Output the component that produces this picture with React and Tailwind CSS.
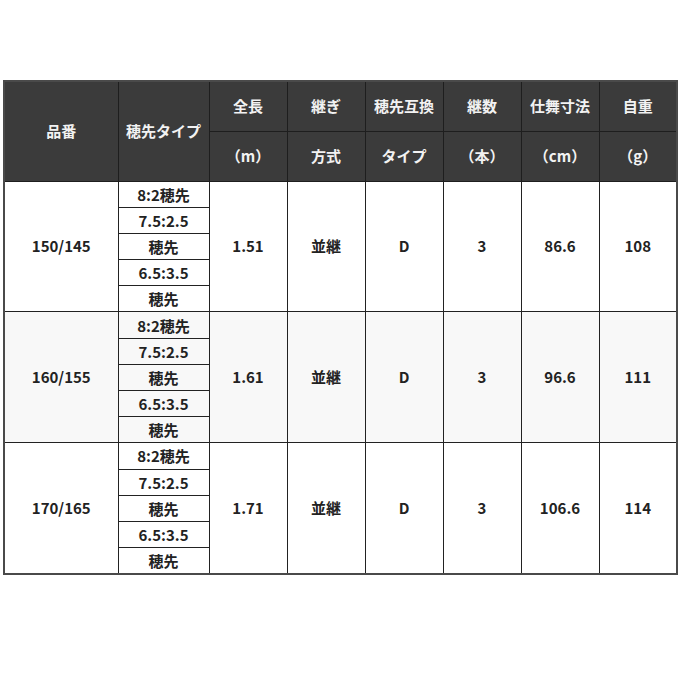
import React from 'react'

const groups = [
  { code: '150/145', length: '1.51', closed: '86.6', weight: '108', bg: 'bg-white' },
  { code: '160/155', length: '1.61', closed: '96.6', weight: '111', bg: 'bg-[#f8f8f8]' },
  { code: '170/165', length: '1.71', closed: '106.6', weight: '114', bg: 'bg-white' },
]

const tips = ['8:2穂先', '7.5:2.5', '穂先', '6.5:3.5', '穂先']

const th = 'border border-[#1e1e1e] bg-[#3b3b3b] text-[#f2f2f2] font-bold text-[15px] text-center align-middle h-[50px] p-0'
const td = 'border border-[#222] text-[#222] font-bold text-[15px] text-center align-middle p-0'

export default function App() {
  return (
    <div className="w-[680px] h-[680px] bg-white pt-[80px] pl-[3px]" style={{ fontFamily: '"Noto Sans CJK JP", "Noto Sans", sans-serif' }}>
      <table className="table-fixed border-collapse w-[673px] border-2 border-[#4a4a4a]">
        <colgroup>
          <col className="w-[114px]" />
          <col className="w-[91px]" />
          <col className="w-[78px]" />
          <col className="w-[78px]" />
          <col className="w-[78px]" />
          <col className="w-[78px]" />
          <col className="w-[78px]" />
          <col className="w-[78px]" />
        </colgroup>
        <thead>
          <tr>
            <th rowSpan={2} className={th}>品番</th>
            <th rowSpan={2} className={th}>穂先タイプ</th>
            <th className={th}>全長</th>
            <th className={th}>継ぎ</th>
            <th className={th}>穂先互換</th>
            <th className={th}>継数</th>
            <th className={th}>仕舞寸法</th>
            <th className={th}>自重</th>
          </tr>
          <tr>
            <th className={th}>（m）</th>
            <th className={th}>方式</th>
            <th className={th}>タイプ</th>
            <th className={th}>（本）</th>
            <th className={th}>（cm）</th>
            <th className={th}>（g）</th>
          </tr>
        </thead>
        <tbody>
          {groups.map(g => (
            <React.Fragment key={g.code}>
              {tips.map((t, i) => (
                <tr key={i} className={`${g.bg} h-[26.2px]`}>
                  {i === 0 && <td rowSpan={5} className={td}>{g.code}</td>}
                  <td className={`${td} leading-none`}>{t}</td>
                  {i === 0 && (
                    <>
                      <td rowSpan={5} className={td}>{g.length}</td>
                      <td rowSpan={5} className={td}>並継</td>
                      <td rowSpan={5} className={td}>D</td>
                      <td rowSpan={5} className={td}>3</td>
                      <td rowSpan={5} className={td}>{g.closed}</td>
                      <td rowSpan={5} className={td}>{g.weight}</td>
                    </>
                  )}
                </tr>
              ))}
            </React.Fragment>
          ))}
        </tbody>
      </table>
    </div>
  )
}
